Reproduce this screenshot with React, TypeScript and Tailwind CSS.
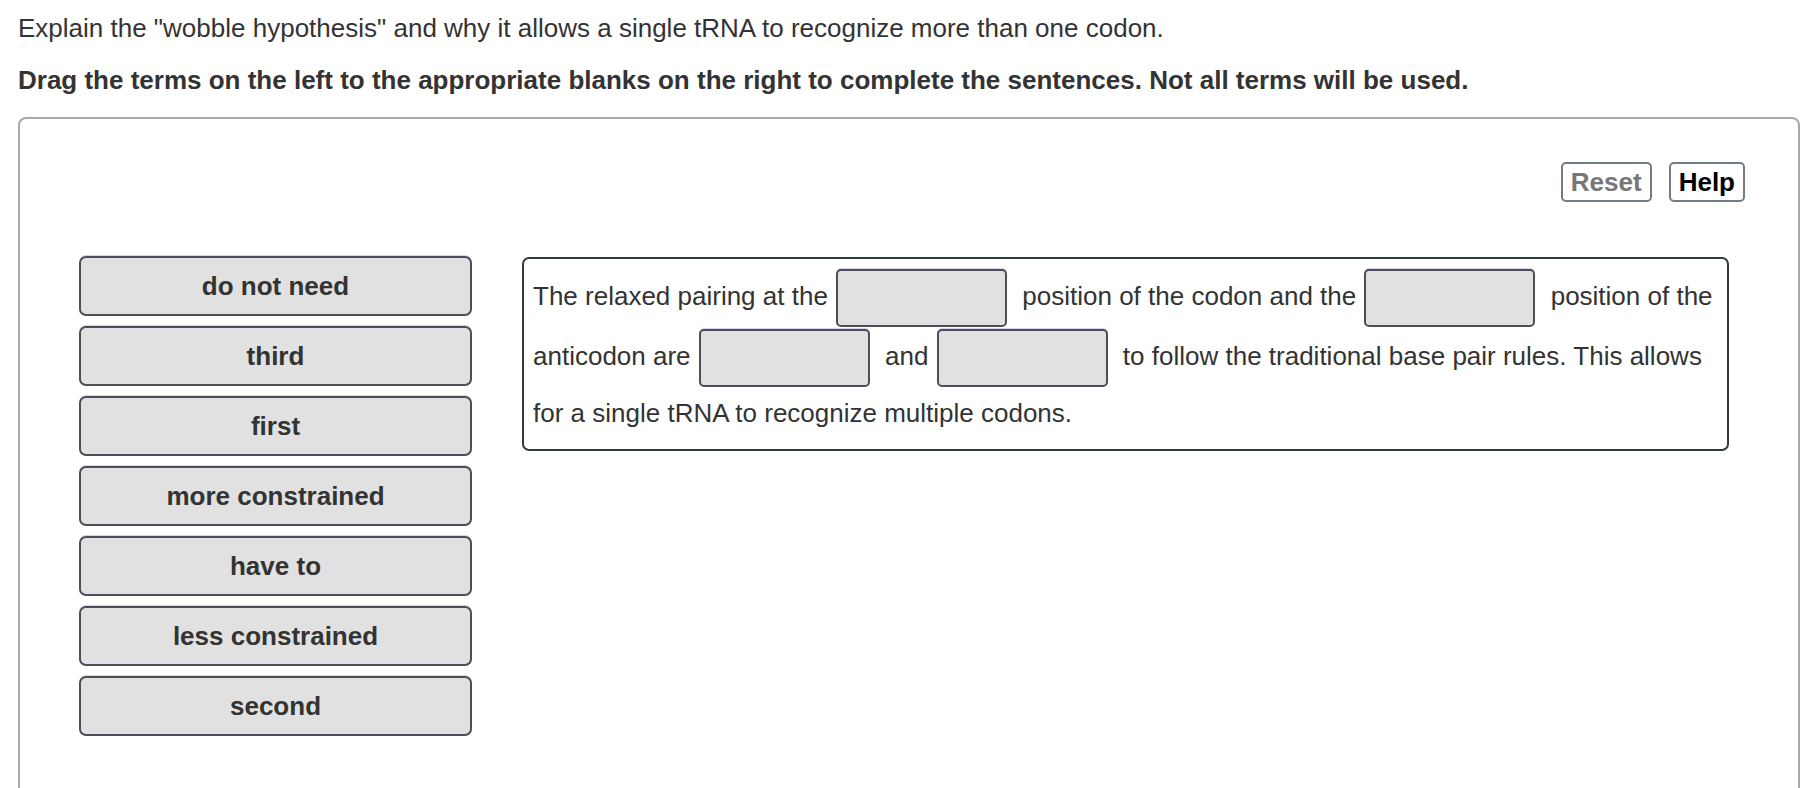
import React from "react";

const terms = [
  "do not need",
  "third",
  "first",
  "more constrained",
  "have to",
  "less constrained",
  "second",
];

function Blank() {
  return (
    <span className="inline-block align-middle w-[171px] h-[58px] my-[1px] ml-[1px] mr-[8px] bg-[#e1e1e1] border-2 border-[#4e4e58] rounded-[5px] shadow-[0_-1px_0_#d4d4ee]" />
  );
}

export default function App() {
  return (
    <div
      className="h-[788px] bg-white text-[#333] pt-[13px] pl-[18px] pr-[18px] overflow-hidden"
      style={{ fontFamily: '"Liberation Sans", Arial, Helvetica, sans-serif' }}
    >
      <p className="text-[26px] leading-[30px] whitespace-nowrap">
        Explain the "wobble hypothesis" and why it allows a single tRNA to recognize more than one codon.
      </p>
      <p className="mt-[22px] text-[26px] leading-[30px] font-bold whitespace-nowrap">
        Drag the terms on the left to the appropriate blanks on the right to complete the sentences. Not all terms will be used.
      </p>
      <div className="mt-[22px] h-[720px] border-2 border-[#a9a9a9] rounded-[8px] pt-[43px]">
        <div className="flex justify-end gap-[17px] pr-[53px]">
          <button className="h-[40px] px-[8px] border-2 border-[#6f7d86] rounded-[5px] bg-white text-[26px] leading-[30px] font-bold text-[#777]">
            Reset
          </button>
          <button className="h-[40px] px-[8px] border-2 border-[#6f7d86] rounded-[5px] bg-white text-[26px] leading-[30px] font-bold text-black">
            Help
          </button>
        </div>
        <div className="mt-[54px] flex items-start gap-[50px] pl-[59px] pr-[69px]">
          <div className="w-[393px] flex flex-col gap-[10px]">
            {terms.map((t) => (
              <div
                key={t}
                className="h-[60px] flex items-center justify-center bg-[#e1e1e1] border-2 border-[#4e4e58] rounded-[7px] shadow-[0_-1px_0_#d4d4ee] text-[26px] leading-[30px] font-bold text-[#333]"
              >
                {t}
              </div>
            ))}
          </div>
          <div className="flex-1 mt-[1px] border-2 border-[#2f3d42] rounded-[7px] pl-[9px] pr-[9px] pt-[9px] pb-[11px] text-[26px] leading-[50px] text-[#333]">
            The relaxed pairing at the <Blank /> position of the codon and the <Blank /> position of the anticodon are <Blank /> and <Blank /> to follow the traditional base pair rules. This allows for a single tRNA to recognize multiple codons.
          </div>
        </div>
      </div>
    </div>
  );
}
